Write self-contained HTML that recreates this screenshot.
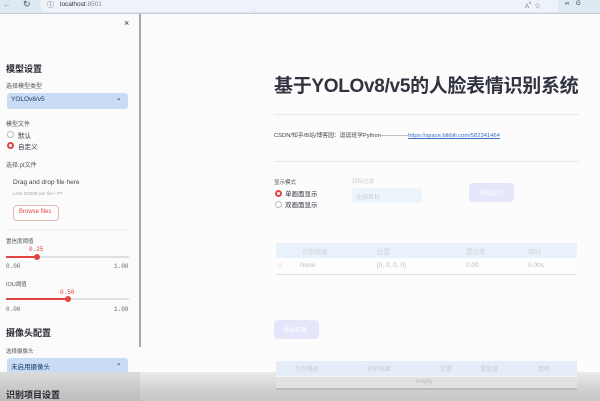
<!DOCTYPE html>
<html><head><meta charset="utf-8"><style>
*{margin:0;padding:0;box-sizing:border-box}
body{width:600px;height:401px;overflow:hidden;background:#fcfcfd;font-family:"Liberation Sans","Noto Sans CJK SC",sans-serif;position:relative;color:#31333f}
.a{position:absolute;white-space:nowrap}
.lbl{font-size:6px;color:#555}
.rad{width:7px;height:7px;border-radius:50%;border:1px solid #bbb;background:#fff}
.rad.on{border:2px solid #e0463f}
.mono{font-family:"Liberation Mono",monospace;font-size:6px;color:#666}
</style></head><body>
<!-- browser bar -->
<div class="a" style="left:0;top:0;width:600px;height:13px;background:#dde9f3"></div>
<div class="a" style="left:40px;top:0;width:215px;height:12px;background:#edf3f9;border-radius:0 0 6px 6px"></div>
<div class="a" style="left:255px;top:0;width:345px;height:12px;background:#edf3f9"></div>
<div class="a" style="left:3px;top:0;font-size:8px;color:#999">←</div>
<div class="a" style="left:23px;top:-1px;font-size:9px;color:#555">↻</div>
<div class="a" style="left:47px;top:0;font-size:7px;color:#555">ⓘ</div>
<div class="a" style="left:60px;top:1px;font-size:6.5px;color:#333">localhost<span style="color:#888">:8501</span></div>
<div class="a" style="left:525px;top:1px;font-size:6px;color:#777">A<sup>ᴬ</sup>&nbsp;&nbsp;☆</div>
<div class="a" style="left:558px;top:0;width:42px;height:12px;background:#dde9f3"></div>
<div class="a" style="left:565px;top:1px;font-size:6px;color:#333">∞&nbsp;&nbsp;&nbsp;&nbsp;G</div>
<div class="a" style="left:0;top:13px;width:600px;height:1px;background:#c8ccd2"></div>
<!-- sidebar -->
<div class="a" style="left:0;top:14px;width:140px;height:387px;background:#fbfbfc"></div>
<div class="a" style="left:139px;top:14px;width:2px;height:333px;background:#a8a8ac"></div>
<div class="a" style="left:124px;top:18px;font-size:9px;color:#333">×</div>
<div class="a" style="left:6px;top:62px;font-size:9px;font-weight:bold;color:#262730">模型设置</div>
<div class="a lbl" style="left:6px;top:81px">选择模型类型</div>
<div class="a" style="left:7px;top:93px;width:121px;height:16px;background:#c9dcf5;border-radius:3px"></div>
<div class="a" style="left:11px;top:96px;font-size:6.5px;color:#1a3a6a">YOLOv8/v5</div>
<div class="a" style="left:116px;top:94px;font-size:7px;color:#333">⌄</div>
<div class="a lbl" style="left:6px;top:119px">模型文件</div>
<div class="a rad" style="left:7px;top:131px"></div>
<div class="a" style="left:18px;top:130px;font-size:6.5px">默认</div>
<div class="a rad on" style="left:7px;top:142px"></div>
<div class="a" style="left:18px;top:141px;font-size:6.5px">自定义</div>
<div class="a lbl" style="left:6px;top:160px">选择.pt文件</div>
<div class="a" style="left:13px;top:179px;font-size:6.5px;color:#444">Drag and drop file here</div>
<div class="a" style="left:13px;top:191px;font-size:4.5px;color:#aaa">Limit 200MB per file • PT</div>
<div class="a" style="left:13px;top:205px;width:46px;height:16px;border:1px solid #e6b8b4;border-radius:4px;background:#fff"></div>
<div class="a" style="left:19px;top:209px;font-size:6px;color:#e0463f">Browse files</div>
<div class="a" style="left:6px;top:229px;width:122px;height:1px;background:#eee"></div>
<div class="a lbl" style="left:6px;top:237px;font-size:5.5px">置信度阈值</div>
<div class="a" style="left:29px;top:246px;font-size:6px;color:#e0463f;font-family:'Liberation Mono',monospace">0.25</div>
<div class="a" style="left:6px;top:256px;width:123px;height:2px;background:#dde1e6"></div>
<div class="a" style="left:6px;top:256px;width:31px;height:2px;background:#e0463f"></div>
<div class="a" style="left:34px;top:254px;width:6px;height:6px;border-radius:50%;background:#e0463f"></div>
<div class="a mono" style="left:6px;top:263px">0.00</div>
<div class="a mono" style="left:114px;top:263px">1.00</div>
<div class="a lbl" style="left:6px;top:280px;font-size:5.5px">IOU阈值</div>
<div class="a" style="left:60px;top:289px;font-size:6px;color:#e0463f;font-family:'Liberation Mono',monospace">0.50</div>
<div class="a" style="left:6px;top:298px;width:123px;height:2px;background:#dde1e6"></div>
<div class="a" style="left:6px;top:298px;width:62px;height:2px;background:#e0463f"></div>
<div class="a" style="left:65px;top:296px;width:6px;height:6px;border-radius:50%;background:#e0463f"></div>
<div class="a mono" style="left:6px;top:306px">0.00</div>
<div class="a mono" style="left:114px;top:306px">1.00</div>
<div class="a" style="left:6px;top:326px;font-size:9px;font-weight:bold;color:#262730">摄像头配置</div>
<div class="a lbl" style="left:6px;top:347px;font-size:5.5px">选择摄像头</div>
<div class="a" style="left:7px;top:358px;width:121px;height:16px;background:#c9dcf5;border-radius:3px"></div>
<div class="a" style="left:11px;top:361px;font-size:6.5px;color:#1a3a6a">未启用摄像头</div>
<div class="a" style="left:116px;top:359px;font-size:7px;color:#333">⌄</div>
<!-- bottom band -->
<div class="a" style="left:0;top:372px;width:600px;height:29px;background:linear-gradient(#ececec,#d4d4d4 50%,#c6c6c6)"></div>
<div class="a" style="left:0;top:372px;width:140px;height:29px;background:linear-gradient(#dcdcdc,#cbcbcb 50%,#bdbdbd)"></div>
<div class="a" style="left:6px;top:388px;font-size:9px;font-weight:bold;color:#262730">识别项目设置</div>
<!-- main -->
<div class="a" style="left:274px;top:71px;font-size:19px;font-weight:bold;color:#31333f;letter-spacing:-0.3px">基于YOLOv8/v5的人脸表情识别系统</div>
<div class="a" style="left:274px;top:114px;width:305px;height:1px;background:#e8e8ea"></div>
<div class="a" style="left:274px;top:130px;font-size:5.8px;color:#444">CSDN/知乎/B站/博客园：逗逗班学Python--------------<span style="color:#3a6fc4;text-decoration:underline">https://space.bilibili.com/582341464</span></div>
<div class="a" style="left:274px;top:161px;width:305px;height:1px;background:#e8e8ea"></div>
<div class="a lbl" style="left:274px;top:178px;font-size:5.5px">显示模式</div>
<div class="a rad on" style="left:275px;top:190px"></div>
<div class="a" style="left:285px;top:188px;font-size:6.5px">单画面显示</div>
<div class="a rad" style="left:275px;top:201px"></div>
<div class="a" style="left:285px;top:199px;font-size:6.5px">双画面显示</div>
<div class="a" style="left:352px;top:177px;font-size:5.5px;color:#ccc">目标过滤</div>
<div class="a" style="left:352px;top:188px;width:70px;height:15px;background:#eef4fb;border-radius:3px"></div>
<div class="a" style="left:356px;top:192px;font-size:6px;color:#c5d0de">全部目标</div>
<div class="a" style="left:469px;top:183px;width:45px;height:19px;background:#e6e6fa;border-radius:4px"></div>
<div class="a" style="left:479px;top:188px;font-size:6px;color:#fff">开始运行</div>
<!-- table 1 -->
<div class="a" style="left:276px;top:243px;width:301px;height:15px;background:#e9f1fb"></div>
<div class="a" style="left:276px;top:258px;width:301px;height:16px;background:#fdfdfe"></div>
<div class="a" style="left:276px;top:274px;width:301px;height:1px;background:#e0e0e2"></div>
<div class="a" style="left:302px;top:246px;font-size:6.5px;color:#d0d4da">识别结果</div>
<div class="a" style="left:377px;top:246px;font-size:6.5px;color:#d0d4da">位置</div>
<div class="a" style="left:466px;top:246px;font-size:6.5px;color:#d0d4da">置信度</div>
<div class="a" style="left:528px;top:246px;font-size:6.5px;color:#d0d4da">用时</div>
<div class="a" style="left:278px;top:262px;font-size:6.5px;color:#d8d8d8">0</div>
<div class="a" style="left:300px;top:262px;font-size:6.5px;color:#bbb">None</div>
<div class="a" style="left:377px;top:262px;font-size:6.5px;color:#bbb">[0, 0, 0, 0]</div>
<div class="a" style="left:466px;top:262px;font-size:6.5px;color:#bbb">0.00</div>
<div class="a" style="left:528px;top:262px;font-size:6.5px;color:#bbb">0.00s</div>
<div class="a" style="left:274px;top:320px;width:45px;height:19px;background:#e6e6fa;border-radius:4px"></div>
<div class="a" style="left:283px;top:325px;font-size:6px;color:#fff">导出结果</div>
<!-- table 2 -->
<div class="a" style="left:276px;top:361px;width:301px;height:15px;background:#e4edf8"></div>
<div class="a" style="left:295px;top:364px;font-size:6px;color:#c8cdd4">文件路径</div>
<div class="a" style="left:367px;top:364px;font-size:6px;color:#c8cdd4">识别结果</div>
<div class="a" style="left:440px;top:364px;font-size:6px;color:#c8cdd4">位置</div>
<div class="a" style="left:480px;top:364px;font-size:6px;color:#c8cdd4">置信度</div>
<div class="a" style="left:538px;top:364px;font-size:6px;color:#c8cdd4">用时</div>
<div class="a" style="left:276px;top:376px;width:301px;height:14px;background:#e2e2e2;border-top:1px solid #f4f4f4;border-bottom:2px solid #bcbcbc"></div>
<div class="a" style="left:416px;top:379px;font-size:6px;color:#b8b8b8;font-style:italic">empty</div>
</body></html>
